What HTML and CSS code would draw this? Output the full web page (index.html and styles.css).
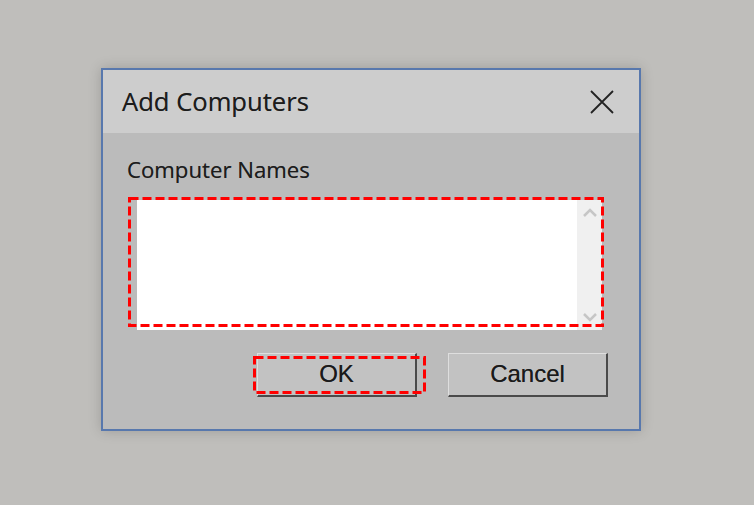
FILE: index.html
```html
<!DOCTYPE html>
<html>
<head>
<meta charset="utf-8">
<link rel="stylesheet" href="styles.css">
</head>
<body>
<div class="dialog">
  <div class="titlebar">
    <span class="title">Add Computers</span>
    <svg class="close" width="24" height="24" viewBox="0 0 24 24"><path d="M1 1 L23 23 M23 1 L1 23" stroke="#222" stroke-width="1.8" fill="none"/></svg>
  </div>
  <div class="content">
    <div class="label">Computer Names</div>
    <div class="textbox">
      <div class="textarea"></div>
      <div class="scrollbar">
        <svg width="16" height="10" viewBox="0 0 16 10"><path d="M2 8 L8 2 L14 8" stroke="#c6c6c6" stroke-width="2.5" fill="none"/></svg>
        <svg width="16" height="10" viewBox="0 0 16 10"><path d="M2 2 L8 8 L14 2" stroke="#c6c6c6" stroke-width="2.5" fill="none"/></svg>
      </div>
      <svg class="mark mark-box" viewBox="0 0 476 130" preserveAspectRatio="none"><rect x="1.5" y="1.5" width="473" height="127" fill="none" stroke="#ff0000" stroke-width="3" stroke-dasharray="9 4"/></svg>
    </div>
    <div class="buttons">
      <div class="btn">OK
        <svg class="mark mark-ok" viewBox="0 0 173 38" preserveAspectRatio="none"><rect x="1.5" y="1.5" width="170" height="35" fill="none" stroke="#ff0000" stroke-width="3" stroke-dasharray="9 4"/></svg>
      </div>
      <div class="btn">Cancel</div>
    </div>
  </div>
</div>
</body>
</html>
```

FILE: styles.css
```css
html, body {
  margin: 0;
  padding: 0;
}
body {
  background: #bfbebb;
  width: 754px;
  height: 505px;
  overflow: hidden;
  padding: 68px 0 0 101px;
  box-sizing: border-box;
}
.dialog {
  width: 540px;
  height: 363px;
  box-sizing: border-box;
  border: 2px solid #5878ad;
  background: #bbbbbb;
  box-shadow: 0 0 12px rgba(0, 0, 0, 0.18);
  display: flex;
  flex-direction: column;
}
.titlebar {
  height: 63px;
  flex: none;
  background: #cdcdcd;
  display: flex;
  align-items: center;
  justify-content: space-between;
  padding: 0 25px 0 19px;
}
.title {
  font-family: "Open Sans", sans-serif;
  font-size: 25.6px;
  color: #1c1c1c;
  text-shadow: 0 0 0.6px rgba(0, 0, 0, 0.5);
}
.close {
  display: block;
  margin-top: 1px;
}
.content {
  padding: 22px 37px 0 24px;
}
.label {
  font-family: "Open Sans", sans-serif;
  font-size: 22.2px;
  line-height: 30px;
  color: #1c1c1c;
  text-shadow: 0 0 0.6px rgba(0, 0, 0, 0.5);
}
.textbox {
  position: relative;
  margin: 15px 0 0 10px;
  height: 130px;
  display: flex;
  background: #ffffff;
}
.textarea {
  flex: 1;
}
.scrollbar {
  width: 25px;
  background: #f0f0f0;
  display: flex;
  flex-direction: column;
  align-items: center;
  justify-content: space-between;
  padding: 8px 0 8px;
}
.scrollbar svg {
  display: block;
}
.mark {
  position: absolute;
  pointer-events: none;
}
.mark-box {
  left: -9px;
  top: -3px;
  width: 476px;
  height: 130px;
}
.buttons {
  margin-top: 23px;
  margin-right: -6px;
  display: flex;
  justify-content: flex-end;
  gap: 31px;
}
.btn {
  position: relative;
  width: 160px;
  height: 44px;
  box-sizing: border-box;
  background: #c2c2c2;
  border-top: 1px solid #dedede;
  border-left: 1px solid #dedede;
  border-right: 2px solid #4a4a4a;
  border-bottom: 2px solid #4a4a4a;
  display: flex;
  align-items: center;
  justify-content: center;
  font-family: "Liberation Sans", Arial, sans-serif;
  font-size: 24px;
  color: #1a1a1a;
  text-shadow: 0 0 0.6px rgba(0, 0, 0, 0.6);
  padding-bottom: 1px;
}
.mark-ok {
  left: -5px;
  top: 2px;
  width: 173px;
  height: 38px;
}
```
